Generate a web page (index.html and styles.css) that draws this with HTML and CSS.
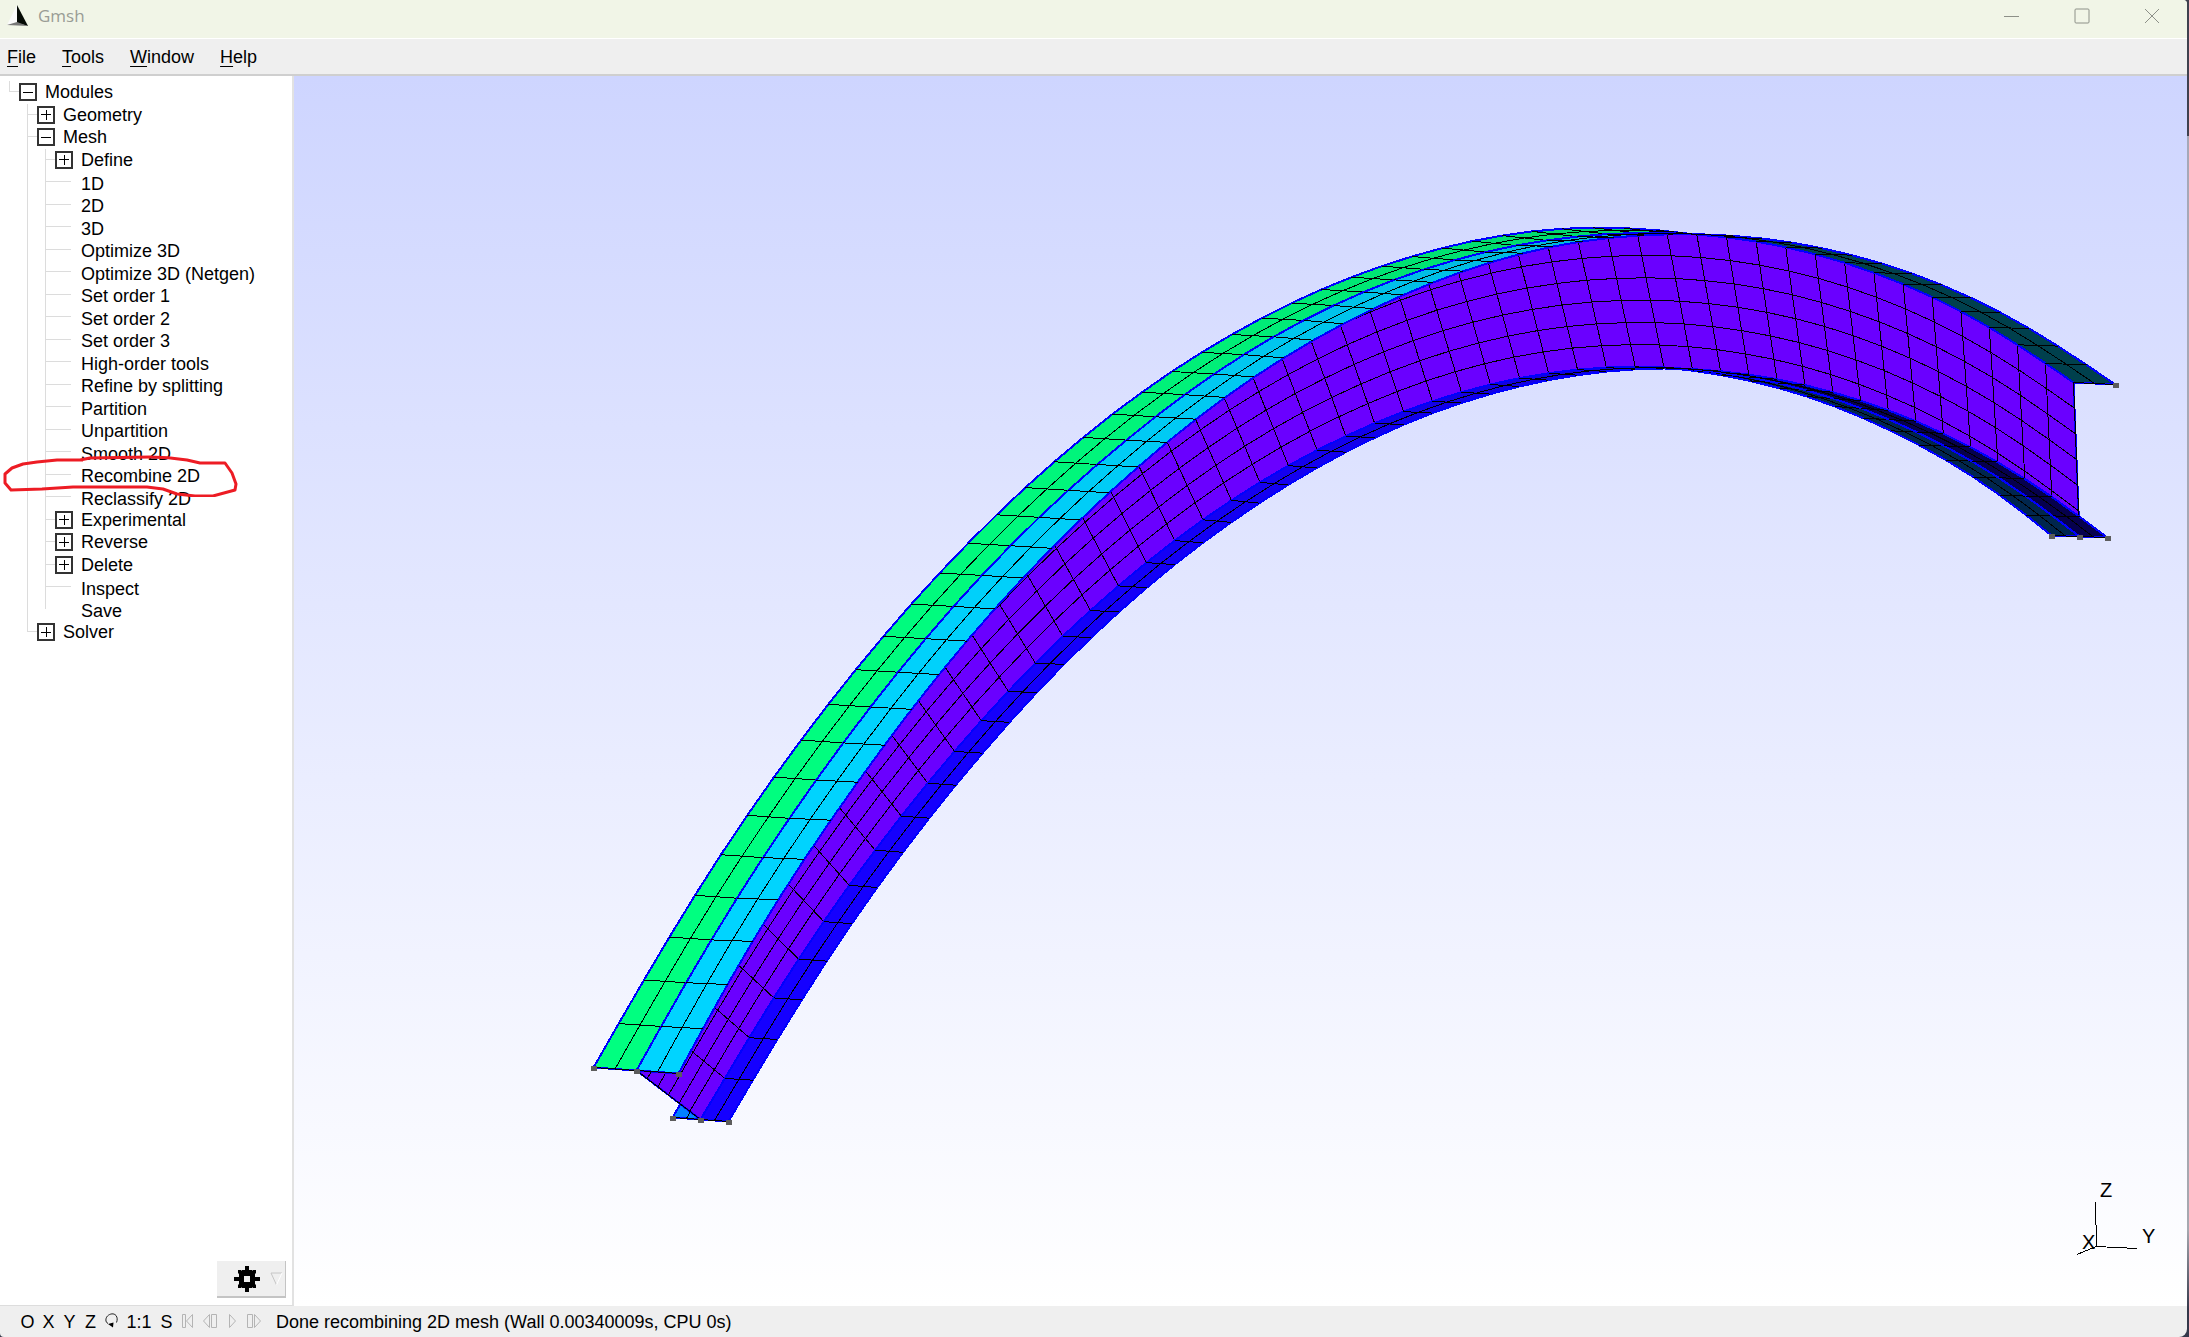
FILE: index.html
```html
<!DOCTYPE html>
<html lang="en">
<head>
<meta charset="utf-8">
<title>Gmsh</title>
<link rel="stylesheet" href="styles.css">
</head>
<body>
<div class="window">
  <header class="titlebar">
    <svg class="logo" width="22" height="22" viewBox="0 0 22 22" aria-hidden="true">
      <path d="M10 0L0 20L10 18Z" fill="#fafafa"/>
      <path d="M10 0L21 21L10 18Z" fill="#050a05"/>
      <path d="M0 20L10 17L21 21Z" fill="#777"/>
    </svg>
    <h1 class="title">Gmsh</h1>
    <div class="controls">
      <button type="button" aria-label="Minimize"><svg width="16" height="16" viewBox="0 0 16 16"><path d="M0 8.5H15"/></svg></button>
      <button type="button" aria-label="Maximize"><svg width="16" height="16" viewBox="0 0 16 16"><rect x="1" y="1" width="14" height="14" rx="1"/></svg></button>
      <button type="button" aria-label="Close"><svg width="16" height="16" viewBox="0 0 16 16"><path d="M1 1L15 15M15 1L1 15"/></svg></button>
    </div>
  </header>
  <nav class="menubar">
    <button type="button"><u>F</u>ile</button>
    <button type="button"><u>T</u>ools</button>
    <button type="button"><u>W</u>indow</button>
    <button type="button"><u>H</u>elp</button>
  </nav>
  <main class="body">
    <aside class="sidebar">
      <ul class="tree">
        <li class="l0 root"><button type="button" class="minus">Modules</button></li>
        <li class="l1"><button type="button" class="plus">Geometry</button></li>
        <li class="l1"><button type="button" class="minus">Mesh</button></li>
        <li class="l2"><button type="button" class="plus">Define</button></li>
        <li class="l2"><button type="button">1D</button></li>
        <li class="l2"><button type="button">2D</button></li>
        <li class="l2"><button type="button">3D</button></li>
        <li class="l2"><button type="button">Optimize 3D</button></li>
        <li class="l2"><button type="button">Optimize 3D (Netgen)</button></li>
        <li class="l2"><button type="button">Set order 1</button></li>
        <li class="l2"><button type="button">Set order 2</button></li>
        <li class="l2"><button type="button">Set order 3</button></li>
        <li class="l2"><button type="button">High-order tools</button></li>
        <li class="l2"><button type="button">Refine by splitting</button></li>
        <li class="l2"><button type="button">Partition</button></li>
        <li class="l2"><button type="button">Unpartition</button></li>
        <li class="l2"><button type="button">Smooth 2D</button></li>
        <li class="l2"><button type="button">Recombine 2D</button></li>
        <li class="l2"><button type="button">Reclassify 2D</button></li>
        <li class="l2"><button type="button" class="plus">Experimental</button></li>
        <li class="l2"><button type="button" class="plus">Reverse</button></li>
        <li class="l2"><button type="button" class="plus">Delete</button></li>
        <li class="l2"><button type="button">Inspect</button></li>
        <li class="l2 last"><button type="button">Save</button></li>
        <li class="l1 last"><button type="button" class="plus">Solver</button></li>
      </ul>
      <svg class="mark" width="240" height="44" viewBox="0 0 240 44" aria-hidden="true">
        <path d="M83 7L57 7L37 9L23 11L12 15L5 21L5 30L11 37L42 36L73 34L147 34L163 36L177 41L195 43L213 43L235 37L236 31L232 20L225 10L200 10L187 7Q168 4 150 4L90 5L80 7"/>
      </svg>
      <button type="button" class="gear" aria-label="Options">
        <svg width="26" height="26" viewBox="0 0 26 26"><path fill-rule="evenodd" d="M11 0h4v4h3v1l1-1h3v3l-1 1v3h5v4h-5v3l1 1v3h-3l-1-1v1h-3v4h-4v-4H8v-1l-1 1H4v-3l1-1v-3H0v-4h5V8L4 7V4h3l1 1V4h3zM10 10v6h6v-6z"/></svg>
        <svg width="13" height="14" viewBox="0 0 13 14"><path d="M6.500 13L1 1H12" fill="none" stroke="#c6c6c6"/><path d="M12 1L6.500 13" fill="none" stroke="#fff"/></svg>
      </button>
    </aside>
    <section class="viewer">
      <svg class="scene" viewBox="294 76 1893 1230" preserveAspectRatio="none" role="img" aria-label="Recombined 2D mesh of an arched beam">
        <g id="mesh" transform="translate(0.5 0.5)"></g>
        <path class="axis" d="M2096.500 1246.500L2095.500 1202M2096 1246.500L2137 1248.500M2096 1246.500L2077 1254.500"/>
        <text x="2100" y="1197">Z</text>
        <text x="2142" y="1243">Y</text>
        <text x="2082" y="1249">X</text>
      </svg>
    </section>
  </main>
  <footer class="status">
    <button type="button">O</button>
    <button type="button">X</button>
    <button type="button">Y</button>
    <button type="button">Z</button>
    <button type="button" class="icon dark" aria-label="Rotate"><svg width="14" height="16" viewBox="0 0 14 16"><path d="M3 10.500C0 9 .5 5 2.500 3C5 .5 9 0 11 2.500C12.500 4.500 12.500 7 11.500 9.500" /><path d="M3 11L8 14.500L8.500 9.500Z" fill="#000" stroke="none"/></svg></button>
    <button type="button" class="wide">1:1</button>
    <button type="button">S</button>
    <button type="button" class="icon" aria-label="Rewind"><svg width="14" height="16" viewBox="0 0 14 16"><path d="M1.500 1.500H4.500V14.500H1.500ZM11.500 1.500V14.500L5.500 8Z"/></svg></button>
    <button type="button" class="icon" aria-label="Step back"><svg width="16" height="16" viewBox="0 0 16 16"><path d="M7.500 1.500V14.500L1.500 8ZM9.500 1.500H14.500V14.500H9.500Z"/></svg></button>
    <button type="button" class="icon" aria-label="Play"><svg width="9" height="16" viewBox="0 0 9 16"><path d="M1.500 1.500L7.500 8L1.500 14.500Z"/></svg></button>
    <button type="button" class="icon" aria-label="Step forward"><svg width="16" height="16" viewBox="0 0 16 16"><path d="M1.500 1.500H6.500V14.500H1.500ZM8.500 1.500L14.500 8L8.500 14.500Z"/></svg></button>
    <p class="message">Done recombining 2D mesh (Wall 0.00340009s, CPU 0s)</p>
  </footer>
</div>
<script src="mesh.js"></script>
</body>
</html>
```
FILE: styles.css
```css
*, *::before, *::after { box-sizing: border-box; }
html, body { height: 100%; margin: 0; }
body {
  background: linear-gradient(#3f414f 0, #3f414f 136px, #a6a8b8 136px, #a6a8b0 92%, #34384a 98%);
  font: 18px/22px "Liberation Sans", Arial, sans-serif;
  color: #000;
}
button { margin: 0; padding: 0; border: 0; background: none; font: inherit; color: inherit; }
p, ul, h1 { margin: 0; padding: 0; }

.window {
  display: flex;
  flex-direction: column;
  height: 100vh;
  margin-right: 2px;
  background: #efefef;
  border-radius: 0 4px 8px 4px;
  overflow: hidden;
}

.titlebar {
  display: flex;
  align-items: flex-start;
  height: 39px;
  padding: 0 5px 0 7px;
  background: #f1f5e7;
  border-bottom: 1px solid #fff;
}
.logo { margin-top: 5px; }
.title {
  flex: 1;
  margin-left: 9px;
  padding-top: 4px;
  font: 17px/24px "Open Sans", sans-serif;
  color: #999c95;
}
.controls { display: flex; }
.controls button { width: 70px; height: 31px; padding-left: 10px; }
.controls svg { display: block; margin: 0 auto; fill: none; stroke: #8d9088; stroke-width: 1; }

.menubar {
  display: flex;
  gap: 26px;
  height: 37px;
  padding: 7px 7px 0;
  border-bottom: 2px solid #cfcfcf;
}
.menubar button { height: 22px; }
.menubar u { text-underline-offset: 3px; text-decoration-thickness: 1px; }

.body { flex: 1; display: flex; min-height: 0; }
.sidebar {
  position: relative;
  flex: none;
  display: flex;
  flex-direction: column;
  justify-content: space-between;
  align-items: flex-end;
  width: 294px;
  padding: 5px 6px 7px 0;
  background: #fff;
  border-right: 2px solid #e2e2e2;
  border-bottom: 1px solid #ddd;
}
.tree {
  display: grid;
  grid-auto-rows: 23px 22px;
  align-self: stretch;
  margin: 0;
  list-style: none;
}
.tree li { position: relative; display: flex; align-items: center; }
.tree button { display: flex; align-items: center; white-space: nowrap; padding-top: 2px; }
.l0 { padding-left: 45px; }
.l1 { padding-left: 63px; }
.l2 { padding-left: 81px; }
.tree .plus, .tree .minus { position: relative; padding: 0 0 1px; }

/* expander boxes hang to the left of their label */
.tree .plus::before, .tree .minus::before {
  content: "";
  position: absolute;
  left: -26px;
  top: 2px;
  width: 18px;
  height: 18px;
  border: 2px solid #333;
  background:
    linear-gradient(#000, #000) center / 10px 1px no-repeat,
    linear-gradient(#000, #000) center / 1px 10px no-repeat,
    #fff;
}
.tree .minus::before { background: linear-gradient(#000, #000) center / 10px 1px no-repeat, #fff; }

/* connector lines */
.l1::before, .l2::before, .root::before {
  content: "";
  position: absolute;
  top: 0;
  bottom: 0;
  left: 27px;
  width: 10px;
  border-left: 1px solid #dcdcdc;
  background: linear-gradient(#dcdcdc, #dcdcdc) 0 10px / 100% 1px no-repeat;
}
.root::before { left: 9px; bottom: 12px; }
.l2::before { left: 45px; width: 26px; }
.last::before { bottom: 12px; }
.l2::after {
  content: "";
  position: absolute;
  top: 0;
  bottom: 0;
  left: 27px;
  border-left: 1px solid #dcdcdc;
}
.mark {
  position: absolute;
  left: 0;
  top: 377px;
  fill: none;
  stroke: #ed1c24;
  stroke-width: 3;
  stroke-linejoin: round;
}
.gear {
  display: flex;
  align-items: center;
  gap: 10px;
  width: 69px;
  height: 37px;
  padding-left: 17px;
  background: #efefef;
  border-right: 1px solid #c4c4c4;
  border-bottom: 2px solid #c4c4c4;
}

.viewer { flex: 1; min-width: 0; background: linear-gradient(#ced5ff, #fff); }
.scene { display: block; width: 100%; height: 100%; }
.scene text { font-size: 20px; }
.axis { fill: none; stroke: #000; shape-rendering: crispEdges; }
#mesh { shape-rendering: crispEdges; }
.cells { stroke: #000; stroke-width: 1; fill: none; }
.edge { stroke: #00f; stroke-width: 2; fill: none; }
.node { fill: #5c5c5c; }

.status {
  display: flex;
  align-items: center;
  height: 31px;
  padding: 1px 0 0 17px;
}
.status button { width: 21px; text-align: center; }
.status .wide { width: 34px; }
.status .icon { width: 22px; height: 31px; padding-top: 2px; }
.status .dark { width: 21px; }
.icon svg { display: block; margin: 0 auto 5px; fill: none; stroke: #b4b4b4; }
.dark svg { stroke: #222; }
.message { padding-left: 11px; white-space: nowrap; }
```
FILE: mesh.js
```js
// Screen positions of the six long edges of the beam, one point per mesh station.
const parse = s => s.trim().split(/\s+/).map(p => p.split(',').map(Number));

// Evens out whole-pixel rounding along an edge; the ends stay fixed.
function smooth(pts) {
  let cur = pts;
  for (let pass = 0; pass < 30; pass++) {
    for (const k of [0.5, -0.51]) {
      cur = cur.map((p, i) => i === 0 || i === cur.length - 1 ? p :
        p.map((v, c) => v + k * ((cur[i - 1][c] + cur[i + 1][c]) / 2 - v)));
    }
  }
  return cur;
}

const T0 = smooth(parse(`593,1067 619,1023 643,980 669,936 695,895 720,854 746,815 774,777 801,740 828,704
855,669 883,636 911,604 939,573 968,543 996,514 1025,487 1054,462 1083,437 1112,414
1141,392 1171,371 1202,352 1232,334 1261,318 1291,303 1321,289 1351,277 1381,266 1411,256
1442,248 1472,241 1502,235 1532,231 1562,229 1592,227 1622,228 1654,230 1688,233 1720,238
1750,245 1779,252 1807,262 1835,271 1864,282 1893,296 1920,310 1949,326 1977,343 2005,360 2031,380`));
const T1 = smooth(parse(`636,1070 661,1026 685,982 711,939 737,898 762,857 789,818 816,780 843,743 870,706
897,672 926,638 953,607 981,575 1010,545 1039,517 1068,490 1097,464 1126,440 1155,417
1184,394 1214,374 1243,354 1273,336 1303,321 1334,305 1363,292 1393,279 1424,269 1455,260
1485,252 1515,245 1546,240 1577,236 1607,234 1637,233 1666,233 1696,234 1726,237 1756,241
1785,247 1815,254 1844,263 1873,272 1903,284 1932,297 1960,311 1989,327 2017,344 2045,362 2073,382`));
const T2 = smooth(parse(`678,1073 702,1027 727,984 752,941 778,899 804,859 830,820 858,782 884,745 911,709
939,674 966,641 994,608 1023,578 1051,548 1080,520 1108,492 1138,467 1167,442 1195,419
1225,397 1254,377 1283,357 1313,340 1343,324 1373,308 1403,295 1433,282 1463,271 1493,261
1523,253 1553,246 1583,241 1613,237 1643,235 1673,234 1703,234 1732,236 1762,238 1791,242
1821,248 1851,255 1881,263 1911,273 1942,285 1971,298 2000,312 2029,328 2057,345 2085,364 2115,384`));
const B1 = smooth(parse(`700,1119 725,1078 749,1037 773,997 798,959 823,921 849,885 875,850 901,816 927,783
954,751 981,720 1008,691 1035,663 1062,636 1090,610 1118,586 1146,562 1174,540 1203,520
1231,500 1259,482 1288,465 1317,450 1345,436 1374,423 1403,411 1432,401 1461,392 1490,384
1519,378 1548,373 1577,369 1606,367 1635,367 1663,367 1692,369 1720,372 1749,377 1777,383
1805,390 1833,398 1861,408 1889,419 1916,432 1944,446 1971,461 1998,477 2026,495 2052,514 2079,536`));
const B2 = smooth(parse(`728,1121 752,1079 777,1038 801,1000 827,961 851,923 876,887 903,852 929,818 955,785
982,753 1009,722 1036,692 1064,664 1091,637 1118,612 1146,588 1174,564 1203,542 1231,522
1259,503 1287,485 1315,468 1346,452 1375,437 1403,424 1432,413 1461,403 1489,394 1519,386
1548,380 1577,375 1606,371 1635,369 1663,368 1692,369 1720,371 1748,374 1777,379 1804,385
1832,392 1860,400 1888,410 1915,421 1943,433 1969,447 1996,461 2023,478 2052,496 2079,515 2107,537`));
const B0 = B1.map((p, i) => [2 * p[0] - B2[i][0], 2 * p[1] - B2[i][1]]);

const root = document.getElementById('mesh');
function add(name, attrs) {
  const el = document.createElementNS('http://www.w3.org/2000/svg', name);
  for (const k in attrs) el.setAttribute(k, attrs[k]);
  root.appendChild(el);
}
const line = pts => 'M' + pts.map(p => p[0].toFixed(1) + ' ' + p[1].toFixed(1)).join('L');
const mix = (a, b, t) => a.map((p, i) => [p[0] + (b[i][0] - p[0]) * t, p[1] + (b[i][1] - p[1]) * t]);

// A strip between two long edges, with shaded cells, grid lines and outline.
function strip(a, b, rgb, rows, shaded) {
  for (let i = 0; i < a.length - 1; i++) {
    let light = 1;
    if (shaded) {
      const ux = b[i][0] - a[i][0], uy = b[i][1] - a[i][1];
      const vx = a[i + 1][0] - a[i][0], vy = a[i + 1][1] - a[i][1];
      light = ux * vy - uy * vx > 0 ? 0.3 : 1 - 0.16 * Math.pow(i / 34, 2);
    }
    const fill = `rgb(${rgb.map(c => Math.round(c * light)).join()})`;
    add('path', { d: line([a[i], a[i + 1], b[i + 1], b[i]]) + 'Z', fill, stroke: fill });
  }
  let d = '';
  for (let r = 1; r < rows; r++) d += line(mix(a, b, r / rows));
  for (let i = 0; i < a.length; i++) d += line([a[i], b[i]]);
  const n = a.length - 1;
  add('path', { d: line(a) + line(b) + line([a[0], b[0]]) + line([a[n], b[n]]), class: 'edge' });
  add('path', { d, class: 'cells' });
}

strip(T0, T1, [0, 255, 128], 2, true);
strip(B0, B1, [0, 128, 255], 2, true);
strip(T1, B1, [106, 0, 255], 6, false);
strip(T1, T2, [0, 212, 255], 2, true);
strip(B1, B2, [21, 0, 255], 2, true);

const nodes = [T0[0], T1[0], T2[0], B0[0], B1[0], B2[0], T2[50], B0[50], B1[50], B2[50]];
for (const [x, y] of nodes) add('rect', { x: x - 3, y: y - 2, width: 6, height: 5, class: 'node' });
```
